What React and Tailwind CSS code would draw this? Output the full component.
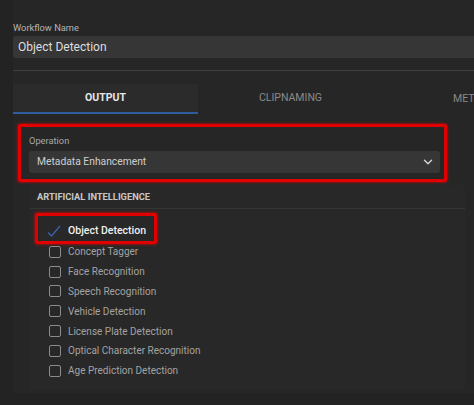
import { ChevronDown } from 'lucide-react'

const OPTIONS = [
  'Concept Tagger',
  'Face Recognition',
  'Speech Recognition',
  'Vehicle Detection',
  'License Plate Detection',
  'Optical Character Recognition',
  'Age Prediction Detection',
]

function Tab({ label, active }) {
  return (
    <div
      className={`w-[185px] shrink-0 h-[30px] flex items-center justify-center text-[10.5px] ${
        active
          ? 'bg-[#2b2b2b] text-[#e6e6e6] font-bold border-b-2 border-[#2f5c9c]'
          : 'text-[#8a8a8a] border-b-2 border-transparent'
      }`}
    >
      {label}
    </div>
  )
}

export default function App() {
  return (
    <div
      className="w-[474px] h-[405px] overflow-hidden bg-[#232323] pl-[13px]"
      style={{ fontFamily: 'Roboto, "Liberation Sans", sans-serif' }}
    >
      <div className="h-[393px] bg-[#262626] pt-[22px]">
        {/* Workflow name */}
        <p className="text-[9.3px] leading-[12px] text-[#b5b5b5]">Workflow Name</p>
        <div className="mt-[2px] h-[22px] bg-[#363636] rounded-l-[3px] flex items-center pl-[5px] text-[12px] text-[#dedede]">
          Object Detection
        </div>
        <div className="mt-[12px] h-px bg-[#404040]" />

        {/* Tabs */}
        <div className="mt-[13px] flex">
          <Tab label="OUTPUT" active />
          <Tab label="CLIPNAMING" />
          <div className="flex-1 min-w-0 overflow-hidden h-[30px] flex items-center pl-[70px] text-[10.5px] text-[#8a8a8a] whitespace-nowrap">
            METADATA
          </div>
        </div>

        {/* Operation */}
        <div className="mt-[10px] ml-[5px] w-[429px] h-[58px] border-[3px] border-[#e10000] rounded-[2px] shadow-[0_0_3px_#ff0000] pl-[8px] pr-[4px] pt-[8px]">
          <p className="text-[9.3px] leading-[12px] text-[#a8a8a8]">Operation</p>
          <div className="mt-[4px] h-[22px] bg-[#363636] rounded-[3px] flex items-center justify-between pl-[8px] pr-[5px] text-[10.3px] text-[#cfcfcf]">
            <span>Metadata Enhancement</span>
            <ChevronDown size={14} strokeWidth={2.5} className="text-[#d0d0d0]" />
          </div>
        </div>

        {/* AI section */}
        <div className="mt-[3px] ml-[17px] w-[435px] h-[205px] bg-[#282828]">
          <div className="h-[24px] flex items-end pb-[4px] pl-[7px] border-b border-[#353535] text-[9.3px] font-bold text-[#c8c8c8]">
            ARTIFICIAL INTELLIGENCE
          </div>
          <div className="mt-[4px] ml-[5px] w-[122px] h-[31px] border-[3px] border-[#e10000] rounded-[2px] shadow-[0_0_3px_#ff0000] flex items-center pt-[5px] pl-[9px] gap-[7px]">
            <svg width="14" height="12" viewBox="0 0 14 12" fill="none">
              <path d="M1 7.5 L4.5 11 L13 1" stroke="#3d5fa8" strokeWidth="1.4" />
            </svg>
            <span className="text-[10.5px] font-medium text-[#f0f0f0]">Object Detection</span>
          </div>
          <div className="-mt-[2px] flex flex-col">
            {OPTIONS.map(o => (
              <div key={o} className="h-[19.8px] flex items-center pl-[19px] gap-[7px]">
                <div className="w-[12px] h-[12px] border border-[#8c8c8c] rounded-[2px]" />
                <span className="text-[10px] text-[#a3a3a3]">{o}</span>
              </div>
            ))}
          </div>
        </div>
      </div>
    </div>
  )
}
